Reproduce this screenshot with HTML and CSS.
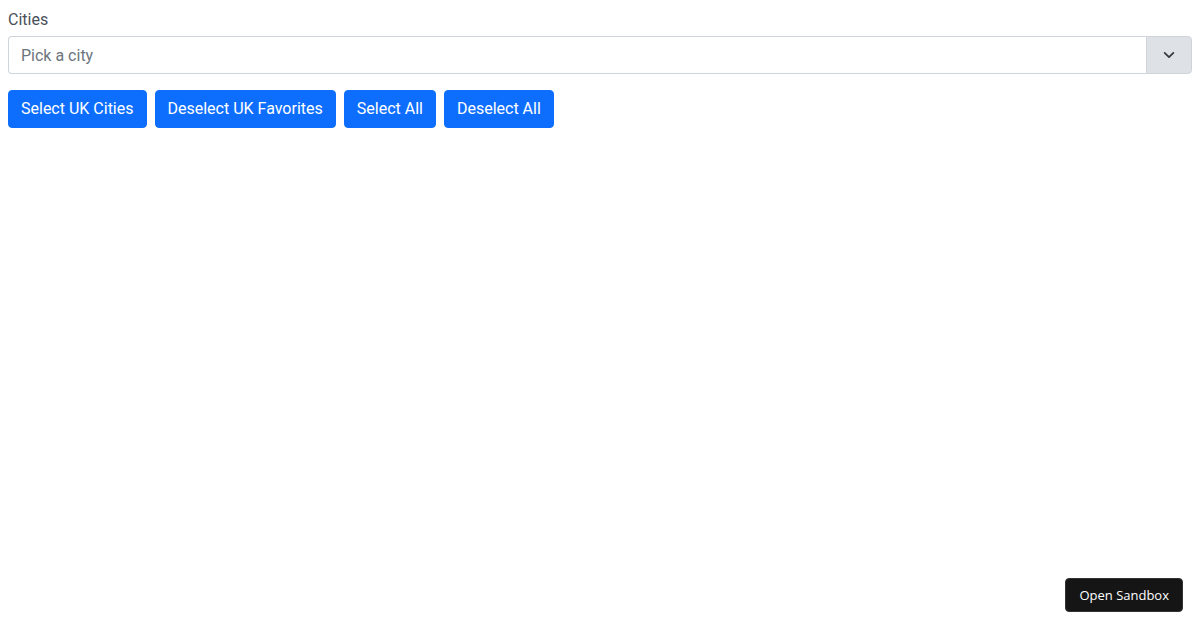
FILE: index.html
```html
<!DOCTYPE html>
<html>
<head>
<meta charset="utf-8">
<link rel="stylesheet" href="styles.css">
</head>
<body>
<div class="field">
  <label class="label">Cities</label>
  <div class="input-group">
    <div class="select">Pick a city</div>
    <button class="toggle" type="button" aria-label="toggle">
      <svg width="14" height="14" viewBox="0 0 16 16"><path d="M3 5.5l5 5 5-5" fill="none" stroke="#343a40" stroke-width="2" stroke-linecap="round" stroke-linejoin="round"/></svg>
    </button>
  </div>
</div>
<div class="actions">
  <button class="btn">Select UK Cities</button>
  <button class="btn">Deselect UK Favorites</button>
  <button class="btn">Select All</button>
  <button class="btn">Deselect All</button>
</div>
<a class="sandbox">Open Sandbox</a>
</body>
</html>
```
FILE: styles.css
```css
html, body { margin: 0; padding: 0; }
body {
  padding: 8px;
  font-family: Roboto, "Liberation Sans", sans-serif;
  font-size: 16px;
  line-height: 24px;
  color: #212529;
  background: #fff;
}
.label {
  display: block;
  color: #495057;
  margin-bottom: 4px;
}
.input-group {
  display: flex;
  height: 38px;
}
.select {
  flex: 1;
  box-sizing: border-box;
  border: 1px solid #ced4da;
  border-right: none;
  border-radius: 4px 0 0 4px;
  padding: 7px 12px 5px;
  color: #6c757d;
}
.toggle {
  width: 46px;
  box-sizing: border-box;
  border: 1px solid #ced4da;
  border-radius: 0 4px 4px 0;
  background: #dee2e6;
  display: flex;
  align-items: center;
  justify-content: center;
  padding: 0;
}
.actions {
  display: flex;
  gap: 8px;
  margin-top: 16px;
}
.btn {
  font-family: inherit;
  font-size: 16px;
  line-height: 24px;
  padding: 6px 12px;
  border: 1px solid #0d6efd;
  background: #0d6efd;
  color: #fff;
  border-radius: 4px;
}
.sandbox {
  position: fixed;
  right: 17px;
  bottom: 18px;
  background: #151515;
  color: #fff;
  font-family: "Open Sans", sans-serif;
  font-size: 13px;
  line-height: 18px;
  padding: 7px 13px;
  border-radius: 4px;
  border: 1px solid #333;
}
```
